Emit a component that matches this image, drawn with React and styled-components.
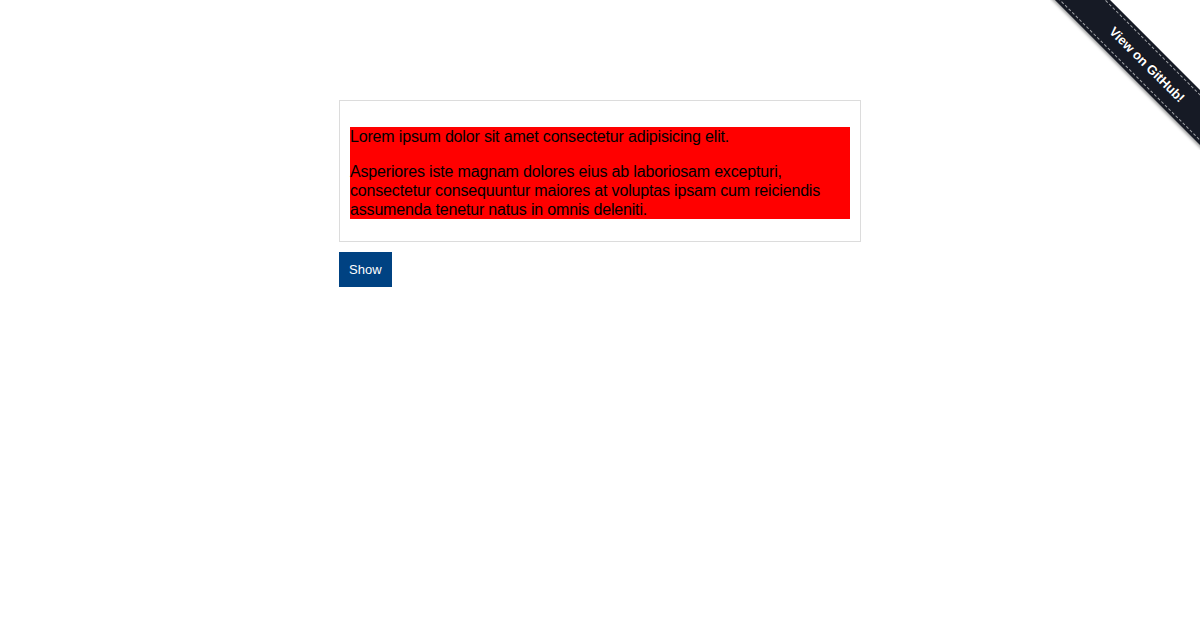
import React, { useState } from 'react';
import styled, { createGlobalStyle } from 'styled-components';

const GlobalStyle = createGlobalStyle`
  html, body {
    margin: 0;
    padding: 0;
    background: #ffffff;
  }
  body {
    font-family: "Liberation Sans", Arial, Helvetica, sans-serif;
    color: #000000;
  }
`;

const Page = styled.div`
  position: relative;
  min-height: 630px;
  overflow: hidden;
`;

const Container = styled.div`
  width: 522px;
  margin: 100px auto 0;
`;

const Panel = styled.div`
  border: 1px solid #dcdcdc;
  padding: 26px 10px 22px;
`;

const Content = styled.div`
  background-color: #ff0000;
  font-size: 16px;
  line-height: 19px;
  letter-spacing: -0.17px;

  p {
    margin: 0;
  }

  p + p {
    margin-top: 16px;
  }
`;

const Button = styled.button`
  display: inline-flex;
  align-items: center;
  justify-content: center;
  height: 35px;
  margin-top: 10px;
  padding: 0 10px;
  border: none;
  border-radius: 0;
  background-color: #004282;
  color: #ffffff;
  font-family: "Liberation Sans", Arial, sans-serif;
  font-size: 13px;
  cursor: pointer;
`;

// corner ribbon, sits over the page
const RibbonWrap = styled.a`
  position: absolute;
  top: 0;
  right: 0;
  width: 150px;
  height: 150px;
  overflow: hidden;
  text-decoration: none;
`;

const RibbonBand = styled.div`
  position: absolute;
  left: -23px;
  top: 45px;
  width: 240px;
  height: 39px;
  box-sizing: border-box;
  padding: 3px 0;
  background-color: #161a25;
  box-shadow: 0 2px 3px rgba(0, 0, 0, 0.35);
  transform: rotate(45deg);
`;

const RibbonText = styled.div`
  height: 100%;
  box-sizing: border-box;
  border-top: 1px dashed rgba(255, 255, 255, 0.6);
  border-bottom: 1px dashed rgba(255, 255, 255, 0.6);
  display: flex;
  align-items: center;
  justify-content: center;
  color: #ffffff;
  font-family: "Liberation Sans", Arial, sans-serif;
  font-weight: 700;
  font-size: 13px;
  text-shadow: 0 -1px rgba(0, 0, 0, 0.5);
`;

export default function App() {
  const [open, setOpen] = useState(true);

  return (
    <Page>
      <GlobalStyle />
      <Container>
        <Panel>
          <Content>
            <p>Lorem ipsum dolor sit amet consectetur adipisicing elit.</p>
            <p>
              Asperiores iste magnam dolores eius ab laboriosam excepturi,
              consectetur consequuntur maiores at voluptas ipsam cum reiciendis
              assumenda tenetur natus in omnis deleniti.
            </p>
          </Content>
        </Panel>
        <Button onClick={() => setOpen(!open)}>Show</Button>
      </Container>
      <RibbonWrap href="#">
        <RibbonBand>
          <RibbonText>View on GitHub!</RibbonText>
        </RibbonBand>
      </RibbonWrap>
    </Page>
  );
}
